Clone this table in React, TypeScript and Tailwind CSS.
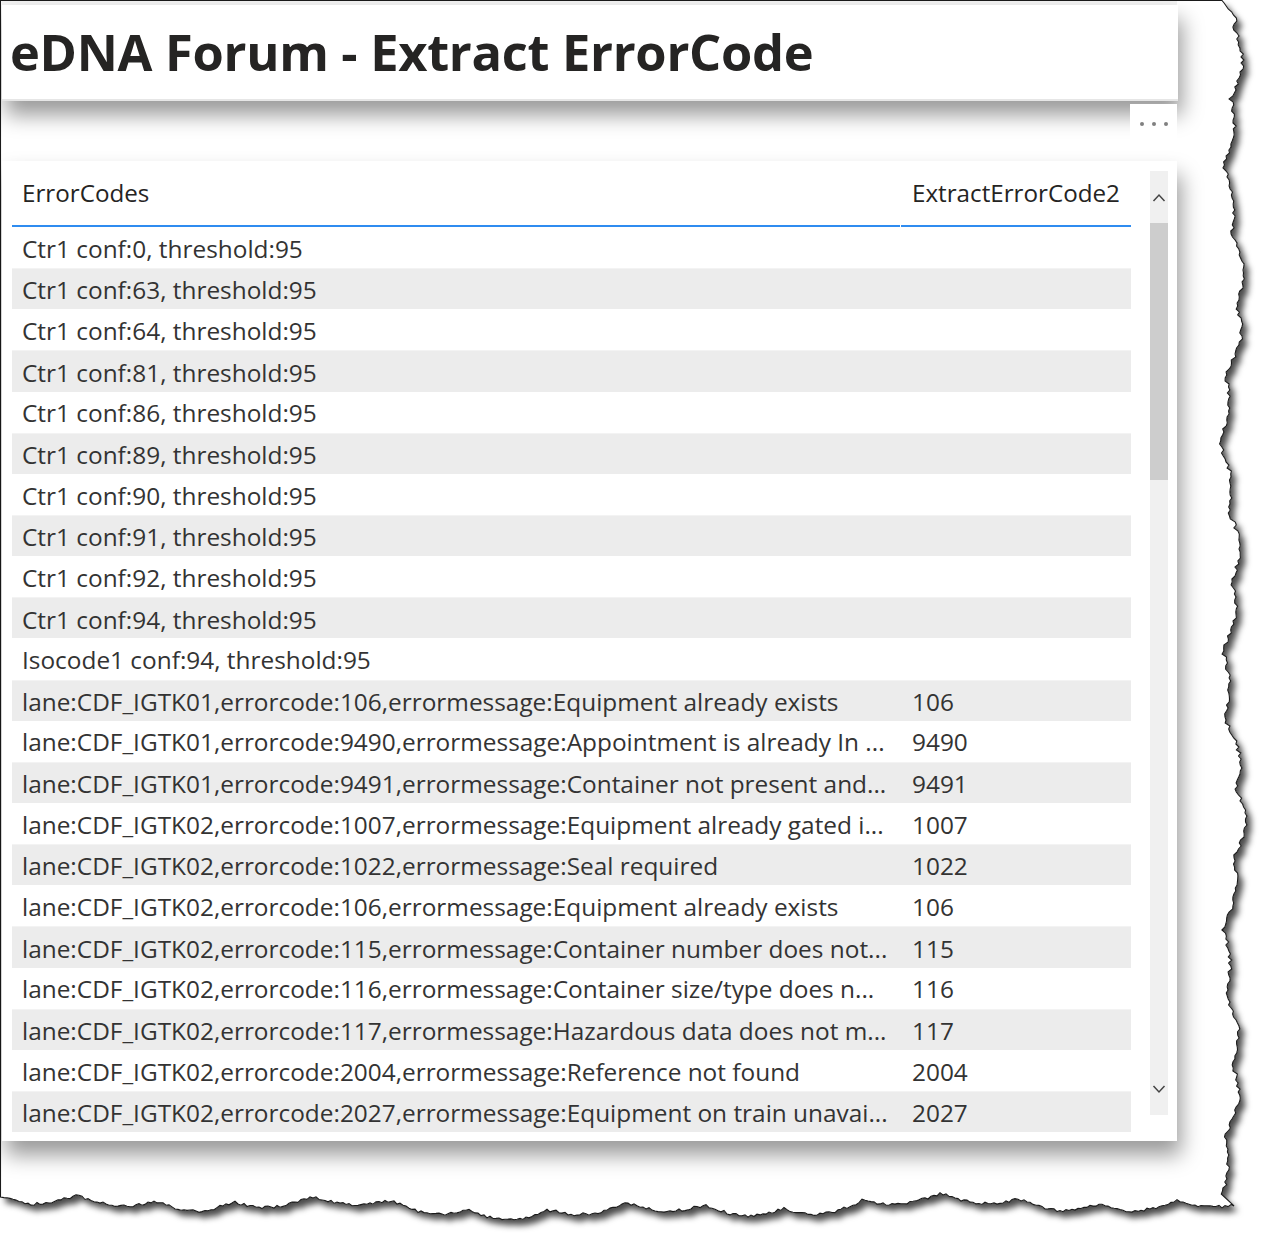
import React from "react";

const rows: [string, string][] = [
  ["Ctr1 conf:0, threshold:95", ""],
  ["Ctr1 conf:63, threshold:95", ""],
  ["Ctr1 conf:64, threshold:95", ""],
  ["Ctr1 conf:81, threshold:95", ""],
  ["Ctr1 conf:86, threshold:95", ""],
  ["Ctr1 conf:89, threshold:95", ""],
  ["Ctr1 conf:90, threshold:95", ""],
  ["Ctr1 conf:91, threshold:95", ""],
  ["Ctr1 conf:92, threshold:95", ""],
  ["Ctr1 conf:94, threshold:95", ""],
  ["Isocode1 conf:94, threshold:95", ""],
  ["lane:CDF_IGTK01,errorcode:106,errormessage:Equipment already exists", "106"],
  ["lane:CDF_IGTK01,errorcode:9490,errormessage:Appointment is already In ...", "9490"],
  ["lane:CDF_IGTK01,errorcode:9491,errormessage:Container not present and...", "9491"],
  ["lane:CDF_IGTK02,errorcode:1007,errormessage:Equipment already gated i...", "1007"],
  ["lane:CDF_IGTK02,errorcode:1022,errormessage:Seal required", "1022"],
  ["lane:CDF_IGTK02,errorcode:106,errormessage:Equipment already exists", "106"],
  ["lane:CDF_IGTK02,errorcode:115,errormessage:Container number does not...", "115"],
  ["lane:CDF_IGTK02,errorcode:116,errormessage:Container size/type does n...", "116"],
  ["lane:CDF_IGTK02,errorcode:117,errormessage:Hazardous data does not m...", "117"],
  ["lane:CDF_IGTK02,errorcode:2004,errormessage:Reference not found", "2004"],
  ["lane:CDF_IGTK02,errorcode:2027,errormessage:Equipment on train unavai...", "2027"],
];

function makeRng(seed: number) {
  let s = seed;
  return () => {
    s = (s * 16807) % 2147483647;
    return (s - 1) / 2147483646;
  };
}

function paperPath(): string {
  const r = makeRng(12345);
  const pts: [number, number][] = [];
  pts.push([0.5, 0.5]);
  pts.push([1222, 0.5]);
  const p1 = r() * 6, p2 = r() * 6, p3 = r() * 6;
  for (let y = 3; y <= 1196; y += 3) {
    let x =
      1232 +
      7 * Math.sin(y / 41 + p1) +
      4 * Math.abs(Math.sin(y / 22 + p2)) * 2 - 4 +
      3 * Math.sin(y / 97 + p3) +
      (r() - 0.5) * 4;
    if (y < 20) x = 1222 + (x - 1222) * (y / 20);
    pts.push([x, y]);
  }
  const q1 = r() * 6, q2 = r() * 6, q3 = r() * 6;
  for (let x = 1234; x >= 3; x -= 3) {
    let y =
      1207 +
      5 * Math.sin(x / 47 + q1) +
      4 * Math.abs(Math.sin(x / 25 + q2)) * 2 - 4 +
      5 * Math.sin(x / 130 + q3) +
      (r() - 0.5) * 3;
    if (x < 30) y = 1197 + (y - 1197) * (x / 30);
    pts.push([x, y]);
  }
  pts.push([0.5, 1197]);
  return "M" + pts.map(([x, y]) => `${x.toFixed(1)},${y.toFixed(1)}`).join(" L") + " Z";
}

const FONT = { fontFamily: '"Open Sans", "Noto Sans", sans-serif' };

function Chevron({ up }: { up?: boolean }) {
  return (
    <svg width="14" height="9" viewBox="0 0 14 9">
      <path
        d={up ? "M1.5 8 L7 2 L12.5 8" : "M1.5 1 L7 7 L12.5 1"}
        fill="none"
        stroke="#444"
        strokeWidth="1.5"
      />
    </svg>
  );
}

export default function App() {
  const d = paperPath();
  return (
    <div className="relative w-[1268px] h-[1240px] bg-white overflow-hidden" style={FONT}>
      <svg className="absolute inset-0" width="1268" height="1240">
        <defs>
          <filter id="sh" x="-5%" y="-5%" width="115%" height="115%">
            <feDropShadow dx="5" dy="6" stdDeviation="3" floodColor="#000" floodOpacity="0.7" />
          </filter>
        </defs>
        <path d={d} fill="#ffffff" filter="url(#sh)" />
        <path d={d} fill="none" stroke="#1a1a1a" strokeWidth="1.1" />
      </svg>

      <div className="relative pl-[2px] pt-[1px]">
        <div className="w-[1175px] h-[4px] bg-[#f2f2f2]" />
        {/* Title card */}
        <div className="w-[1176px] h-[96px] bg-white border-b-2 border-[#e6e6e6] shadow-[4px_14px_20px_rgba(0,0,0,0.4)] flex items-center pl-[8px]">
          <span className="text-[50.6px] font-bold text-[#252423] tracking-[-0.3px] leading-none">
            eDNA Forum - Extract ErrorCode
          </span>
        </div>
        {/* Ellipsis */}
        <div className="w-[1175px] flex justify-end mt-[3px]">
          <div className="w-[47px] h-[37px] bg-white flex items-center justify-center gap-[8px] pt-[2px]">
            <span className="w-[4px] h-[4px] rounded-full bg-[#808080]" />
            <span className="w-[4px] h-[4px] rounded-full bg-[#808080]" />
            <span className="w-[4px] h-[4px] rounded-full bg-[#808080]" />
          </div>
        </div>
        {/* Table card */}
        <div className="mt-[20px] w-[1175px] h-[980px] bg-white shadow-[4px_14px_20px_rgba(0,0,0,0.4)] flex">
          <div className="ml-[10px] w-[1119px]">
            <div className="flex h-[66px] text-[24.2px] text-[#252423]">
              <div className="w-[888px] border-b-2 border-[#2f8cf0] flex items-center pl-[10px]">
                ErrorCodes
              </div>
              <div className="w-[230px] ml-[1px] border-b-2 border-[#2f8cf0] flex items-center pl-[11px]">
                ExtractErrorCode2
              </div>
            </div>
            {rows.map(([a, b], i) => (
              <div
                key={i}
                className={
                  "flex h-[41.15px] text-[24.4px] text-[#333333] items-center pt-[3px] " +
                  (i % 2 === 1 ? "bg-[#ececec] border-t border-[#f3f3f3]" : "bg-white")
                }
              >
                <div className="w-[888px] pl-[10px] whitespace-nowrap overflow-hidden">{a}</div>
                <div className="w-[231px] pl-[12px] whitespace-nowrap">{b}</div>
              </div>
            ))}
          </div>
          <div className="ml-[19px] mt-[10px] w-[18px] h-[944px] bg-[#f0f0f0] flex flex-col">
            <div className="h-[52px] flex items-center justify-center">
              <Chevron up />
            </div>
            <div className="h-[257px] bg-[#cdcdcd]" />
            <div className="flex-1" />
            <div className="h-[52px] flex items-center justify-center">
              <Chevron />
            </div>
          </div>
        </div>
      </div>
    </div>
  );
}
